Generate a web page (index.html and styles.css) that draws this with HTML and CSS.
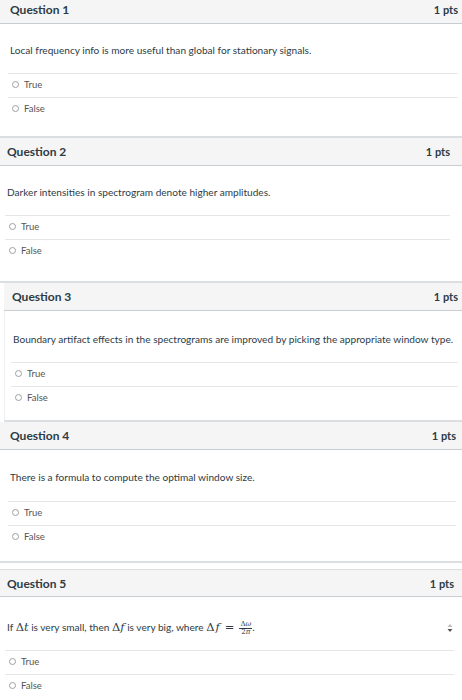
FILE: index.html
```html
<!DOCTYPE html>
<html>
<head>
<meta charset="utf-8">
<link rel="stylesheet" href="styles.css">
</head>
<body>
<div class="quiz">
  <section class="card q1">
    <header class="q-header"><span class="q-title">Question 1</span><span class="q-pts">1 pts</span></header>
    <div class="q-body">
      <p class="q-text">Local frequency info is more useful than global for stationary signals.</p>
      <ul class="answers">
        <li class="answer"><span class="radio"></span><span>True</span></li>
        <li class="answer"><span class="radio"></span><span>False</span></li>
      </ul>
    </div>
  </section>
  <section class="card q2">
    <header class="q-header"><span class="q-title">Question 2</span><span class="q-pts">1 pts</span></header>
    <div class="q-body">
      <p class="q-text">Darker intensities in spectrogram denote higher amplitudes.</p>
      <ul class="answers">
        <li class="answer"><span class="radio"></span><span>True</span></li>
        <li class="answer"><span class="radio"></span><span>False</span></li>
      </ul>
    </div>
  </section>
  <section class="card q3">
    <header class="q-header"><span class="q-title">Question 3</span><span class="q-pts">1 pts</span></header>
    <div class="q-body">
      <p class="q-text">Boundary artifact effects in the spectrograms are improved by picking the appropriate window type.</p>
      <ul class="answers">
        <li class="answer"><span class="radio"></span><span>True</span></li>
        <li class="answer"><span class="radio"></span><span>False</span></li>
      </ul>
    </div>
  </section>
  <section class="card q4">
    <header class="q-header"><span class="q-title">Question 4</span><span class="q-pts">1 pts</span></header>
    <div class="q-body">
      <p class="q-text">There is a formula to compute the optimal window size.</p>
      <ul class="answers">
        <li class="answer"><span class="radio"></span><span>True</span></li>
        <li class="answer"><span class="radio"></span><span>False</span></li>
      </ul>
    </div>
  </section>
  <section class="card q5">
    <header class="q-header"><span class="q-title">Question 5</span><span class="q-pts">1 pts</span></header>
    <div class="q-body">
      <div class="q-row">
        <p class="q-text">If <span class="m">Δ<i>t</i></span> is very small, then <span class="m">Δ<i>f</i></span> is very big, where <span class="m">Δ<i class="fi">f</i><span class="eq">=</span><span class="frac"><span class="num">Δ<i>ω</i></span><span class="den">2<i>π</i></span></span></span>.</p>
        <svg class="spin" width="6" height="10" viewBox="0 0 6 10"><path d="M3 1 L5.5 4 H0.5 Z" fill="#bbb"/><path d="M3 9 L5.5 6 H0.5 Z" fill="#555"/></svg>
      </div>
      <ul class="answers">
        <li class="answer"><span class="radio"></span><span>True</span></li>
        <li class="answer"><span class="radio"></span><span>False</span></li>
      </ul>
    </div>
  </section>
</div>
</body>
</html>
```
FILE: styles.css
```css
* { box-sizing: border-box; }
html, body { margin: 0; padding: 0; background: #fff; }
body { font-family: Lato, "Open Sans", sans-serif; color: #2d3b45; width: 462px; height: 700px; overflow: hidden; }
.quiz { display: flex; flex-direction: column; }
.card { --pl: 10px; --pr: 4px; --pt: 19px; --pb: 16px; --am: 16px; border-bottom: 2px solid #dcdfe1; }
.q1 { --pl: 10px; --pr: 4px; --pt: 19px; --pb: 15px; }
.q2 { --pl: 7px; --pr: 12px; --pt: 19px; --pb: 18px; }
.q3 { --pl: 8px; --pr: 4px; --pt: 21px; --pb: 10px; --am: 16px; margin-left: 4px; border-left: 1px solid #eceeef; }
.q3 .q-header { margin-left: -1px; }
.q4 { --pl: 10px; --pr: 6px; --pt: 20px; --pb: 12px; --am: 17px; }
.q5 { --pl: 7px; --pr: 8px; --pt: 23px; --pb: 14px; --am: 14px; margin-top: 6px; border-bottom: none; border-top: 1px solid #dcdfe1; }
.q-header {
  height: 28px; background: #f5f5f5; border-bottom: 1px solid #c7cdd1;
  display: flex; justify-content: space-between; align-items: center;
  padding: 0 var(--pr) 0 var(--pl);
}
.q1 .q-header { margin-top: -4px; }
.q5 .q-header { height: 27px; }
.q-title { font-weight: 700; font-size: 12px; color: #2d3b45; }
.q-pts { font-weight: 700; font-size: 11px; color: #2d3b45; }
.q-body { padding: var(--pt) var(--pr) var(--pb) var(--pl); }
.q-text { margin: 0; font-size: 10.1px; line-height: 14px; color: #2d3b45; }
.q-row { display: flex; justify-content: space-between; align-items: center; }
.answers { list-style: none; margin: var(--am) 0 0 -2px; padding: 0; }
.answer {
  height: 24px; border-top: 1px solid #e4e7e9; display: flex; align-items: center; gap: 5px;
  padding: 0 0 2px 4px; font-size: 9.5px; color: #555;
}
.radio { width: 7px; height: 7px; border: 1px solid #9aa0a4; border-radius: 50%; background: #fff; }
.m { font-family: "DejaVu Serif", "Liberation Serif", serif; font-size: 11.5px; }
.m i { font-style: italic; }
.fi { margin-left: 1px; }
.eq { margin: 0 5px; }
.frac { display: inline-flex; flex-direction: column; align-items: center; vertical-align: middle; font-size: 7px; line-height: 7px; }
.num { border-bottom: 0.5px solid #2d3b45; padding: 0 1px; }
.spin { margin-right: 1px; }
```
